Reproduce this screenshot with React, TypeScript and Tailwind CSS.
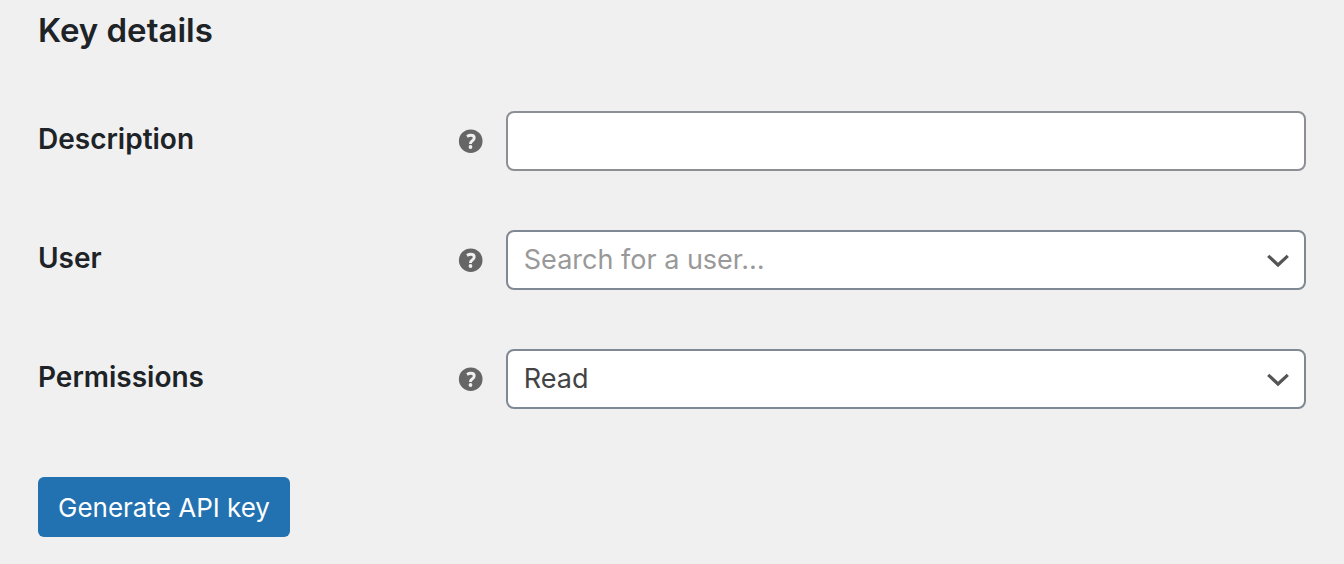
import { ReactNode } from "react";

interface FieldRowProps {
  id: string;
  label: string;
  help: string;
  children: ReactNode;
}

function HelpIcon({ label }: { label: string }) {
  return (
    <svg role="img" aria-label={label} viewBox="0 0 24 24" className="size-6 shrink-0 overflow-visible">
      <circle cx="12.700" cy="12.200" r="11.800" fill="#666666" />
      <path
        d="M9 7.500C10.300 6.700 11.600 6.300 12.900 6.300c2.100 0 3.300 1 3.300 2.700 0 1.500-.8 2.200-2 3-1.200.8-1.700 1.400-1.700 2.500v.6"
        fill="none"
        stroke="#f0f0f0"
        strokeWidth="2.900"
      />
      <circle cx="12.500" cy="18" r="1.900" fill="#f0f0f0" />
    </svg>
  );
}

function Chevron() {
  return (
    <svg
      aria-hidden="true"
      viewBox="0 0 22 14"
      className="pointer-events-none absolute top-6 right-[17px] h-3.5 w-[22px]"
    >
      <path d="M1.200 1.800 11 11 20.800 1.800" fill="none" stroke="#555555" strokeWidth="3.200" />
    </svg>
  );
}

function FieldRow({ id, label, help, children }: FieldRowProps) {
  return (
    <div className="flex items-center gap-6">
      <div className="flex w-[35%] shrink-0 items-center justify-between">
        <label htmlFor={id} className="pb-1 text-[28px] leading-9 font-semibold">
          {label}
        </label>
        <HelpIcon label={help} />
      </div>
      <div className="relative min-w-0 flex-1">{children}</div>
    </div>
  );
}

export default function App() {
  return (
    <div className="min-h-screen bg-[#f0f0f0] px-[38px] pt-2 pb-6 font-['Inter','Liberation_Sans',sans-serif] text-[#1d2327]">
      <h2 className="text-[33px] leading-11 font-semibold">Key details</h2>
      <form className="pt-[59px]" onSubmit={(e) => e.preventDefault()}>
        <div className="flex flex-col gap-[59px]">
          <FieldRow id="description" label="Description" help="Friendly name for identifying this key">
            <input
              id="description"
              type="text"
              className="block h-[60px] w-full rounded-lg border-2 border-[#8c8f94] bg-white px-4 text-[27px] text-[#2c3338]"
            />
          </FieldRow>
          <FieldRow id="user" label="User" help="Owner of these keys">
            <select
              id="user"
              defaultValue=""
              className="block h-[60px] w-full appearance-none rounded-lg border-2 border-[#7e8993] bg-white px-4 text-[27px] text-[#999999]"
            >
              <option value="">Search for a user…</option>
            </select>
            <Chevron />
          </FieldRow>
          <FieldRow id="permissions" label="Permissions" help="Access type of these keys">
            <select
              id="permissions"
              defaultValue="read"
              className="block h-[60px] w-full appearance-none rounded-lg border-2 border-[#7e8993] bg-white px-4 text-[27px] text-[#444444]"
            >
              <option value="read">Read</option>
            </select>
            <Chevron />
          </FieldRow>
        </div>
        <button
          type="submit"
          className="mt-[68px] h-[60px] rounded-md bg-[#2271b1] px-5 text-[26px] text-white"
        >
          Generate API key
        </button>
      </form>
    </div>
  );
}
